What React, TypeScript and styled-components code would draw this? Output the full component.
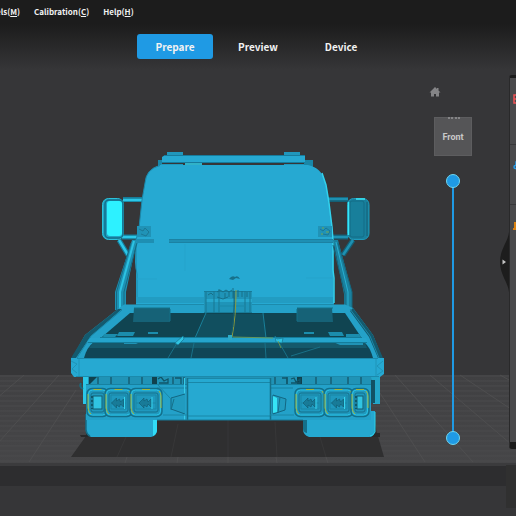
import React, { useState } from "react";
import styled, { createGlobalStyle } from "styled-components";

const GlobalStyle = createGlobalStyle`
  * { box-sizing: border-box; }
  body {
    margin: 0;
    background: #363638;
    color: #f2f2f2;
    font-family: "Noto Sans CJK SC", "Noto Sans", sans-serif;
  }
  button, input { font: inherit; color: inherit; margin: 0; padding: 0; border: 0; background: none; }
  button { cursor: pointer; }
`;

const Page = styled.div`
  position: relative;
  display: flex;
  flex-direction: column;
  min-height: 100vh;
  overflow: hidden;
  isolation: isolate;
`;

const Header = styled.header`
  display: flex;
  flex-direction: column;
  gap: 10px;
  height: 70px;
  background: linear-gradient(#1c1c1c 0, #1c1c1c 24px, #363638 100%);
`;

const MenuBar = styled.nav`
  display: flex;
  align-items: center;
  gap: 14px;
  height: 24px;
  margin-left: -4px;
`;

const MenuButton = styled.button`
  font-size: 8px;
  font-weight: 700;
  line-height: 12px;
  white-space: nowrap;
`;

const TabBar = styled.nav`
  display: flex;
  justify-content: center;
  gap: 7px;
`;

const TabButton = styled.button<{ $active: boolean }>`
  width: 76px;
  height: 25px;
  border-radius: 3px;
  background: ${(p) => (p.$active ? "#1f9ae4" : "transparent")};
  font-size: 10px;
  font-weight: 700;
  line-height: 25px;
`;

const Workspace = styled.main`
  flex: 1;
  display: flex;
  justify-content: flex-end;
`;

const SceneLayer = styled.svg`
  position: absolute;
  inset: 0;
  z-index: -1;
  width: 100%;
  height: 100%;
`;

const ViewTools = styled.div`
  display: flex;
  flex-direction: column;
  width: 38px;
  margin-right: 37px;
  padding: 16px 0 71px;
`;

const HomeButton = styled.button`
  display: flex;
  align-items: center;
  width: 12px;
  height: 12px;
  margin-left: -5px;
`;

const ViewCube = styled.button`
  position: relative;
  width: 38px;
  height: 39px;
  margin: 19px 0 18px;
  border: 1px solid #5d5d5f;
  background: #555557;
  color: #c8c8c8;
  font-family: Roboto, sans-serif;
  font-size: 9px;
  font-weight: 700;
`;

const CubeTop = styled.span`
  position: absolute;
  top: -1px;
  left: 13px;
  width: 12px;
  border-top: 2px dotted #858587;
`;

const LayerSlider = styled.div`
  position: relative;
  flex: 1;
  width: 14px;
  margin: 0 auto;
  &::before {
    content: "";
    position: absolute;
    inset: 7px 6px;
    background: #1f9ae4;
  }
`;

const LayerRange = styled.input`
  position: absolute;
  inset: 0;
  width: 14px;
  height: 100%;
  appearance: none;
  writing-mode: vertical-lr;
  direction: rtl;
  pointer-events: none;
  &::-webkit-slider-thumb {
    appearance: none;
    width: 14px;
    height: 14px;
    border: 1px solid #6fd5ee;
    border-radius: 50%;
    background: #1f9ae4;
    pointer-events: auto;
  }
`;

const SideDock = styled.aside`
  position: relative;
  display: flex;
  flex-direction: column;
  width: 7px;
  padding: 5px 0 8px;
`;

const SidePanel = styled.div`
  flex: 1;
  overflow: hidden;
  margin-bottom: 59px;
  border-top: 3px solid #1b1b1b;
  border-bottom: 7px solid #1b1b1b;
  border-left: 1px solid #29292a;
  border-radius: 3px 0 0 3px;
  background: #4a4a4c;
`;

const PanelSection = styled.div`
  display: flex;
  align-items: center;
  height: 60px;
  padding-left: 3px;
  border-bottom: 1px solid #38383a;
  &:first-child { height: 67px; padding-bottom: 24px; }
  &:nth-child(2) { padding-bottom: 18px; }
  &:last-child { padding-bottom: 16px; border: 0; }
  svg { flex: none; }
`;

const CollapseButton = styled.button`
  position: absolute;
  top: 162px;
  right: 7px;
  width: 10px;
  height: 60px;
  svg { display: block; }
`;

const DARK = "#145a6e";
const EDGE = "#1987a8";
const BODY = "#26a9d2";
const BRIGHT = "#31dcf7";

type LampProps = { x: number; w: number; small?: boolean };

const Lamp = ({ x, w, small }: LampProps) => (
  <g fill="none">
    <rect x={x} y="388.5" width={w} height="28" rx="5" fill="#1f98bd" stroke="#126f8a" strokeWidth="1.4" />
    <rect x={x + 1.5} y="390" width={w - 3} height="25" rx="4" stroke="#2bc3e6" />
    <rect x={x + 4} y="393" width={w - 8} height="19" rx="2" stroke="#16718c" />
    <path d={`M${x + w / 2 - 4} 389.5h8M${x + 1} 394v14q1 5 3 6M${x + w - 3} 391q2 2 2 5v12`} stroke="#a3b43a" />
    {small ? (
      <g>
        <rect x={x + 6} y="396" width={w - 12} height="13" fill="#30c4e2" stroke={DARK} />
        <path d={`M${x + 5} 396v13`} stroke="#0f586b" strokeWidth="2" strokeDasharray="2 2" />
      </g>
    ) : (
      <g>
        <path d={`M${x + 6} 395h${w - 12}v14h-${w - 12}zM${x + 6} 403h${w - 12}`} stroke="#1a86a5" />
        <path
          d={`M${x + w / 2 - 7} 403l5-5v3l3-2 1 3 3-3v8l-3-3-1 3-3-2v3z`}
          fill="#187b98" stroke="#10596f" strokeWidth=".6"
        />
        <path d={`M${x + w / 2 + 6} 397v12`} stroke="#37d4ed" />
      </g>
    )}
  </g>
);

const FloorLines = () => (
  <g stroke="#505052" fill="none" strokeWidth=".8">
    <path d="M430 375L532 462M460 375L590 462M395 375L473 462M378 390L425 462M500 375L660 462" />
    <path d="M24 375L-78 462M-6 375L-136 462M59 375L-19 462M76 390L29 462" />
    <path d="M127 457l-2 6M178 457l-1 6M228 457v6M276 457l1 6M326 457l2 6" />
  </g>
);

const Truck = () => (
  <g>
    <path d="M86 436L71 457H384L377 433L374 420H86z" fill="#2f2f30" />
    <path d="M80 435h8v2h-7zM374 433h6v4h-8z" fill="#29292a" />
    <path d="M126 437l-9 20M178 424l-7 33M228 420v37M275 422l2 35M320 437l6 20" stroke="#373738" />

    {/* roof light bar */}
    <path d="M158 160h4v6h-4zM304 160h9v7h-9z" fill={EDGE} />
    <path d="M167 152h16v5h-16zM284 152h16v5h-16z" fill="#2097bc" />
    <path d="M162 157l3-2H305v8H162z" fill={BODY} />
    <path d="M162 162.5H305M164 155.500H305" stroke="#167c9d" />
    <path d="M161 164h22v2h-22zM284 164h20v2h-20z" fill="#2098bd" />
    <path d="M185 164h17" stroke={BRIGHT} strokeWidth="1.500" />

    {/* mirror arms */}
    <path d="M123 199.500h20M122 237h17M119 240l9 15" stroke="#167c99" strokeWidth="5" />
    <path d="M123 200h20M122 237h17M119 240l9 15" stroke="#2bc7e8" strokeWidth="2.500" />
    <path d="M328 199.500h20M332 237h16M353 240l-10 15" stroke="#145f75" strokeWidth="5" />
    <path d="M328 199h20M332 237h16M353 240l-10 15" stroke="#1d91b2" strokeWidth="2.500" />

    {/* cab */}
    <path d="M160 165H308Q322 168 325 182L327 190L329 203L332 227L333 241L334 306H136V270L135 262L136 240L139 228L142 200L145 183Q146 169 160 165z" fill={BODY} />
    <path d="M160 165.500Q146 169 145 183L142 200L139 228L136 240V268l1 6V303" stroke="#1b88aa" fill="none" />
    <path d="M322 173L326 185L329 203L332 227L333 241V270l1 8V303" stroke="#32d1ed" strokeWidth="1.500" fill="none" />
    <path d="M136 297H333V303H136z" fill="#229cc2" />
    <path d="M136 304.500H334" stroke="#147491" />
    <path d="M137 239h17v4h-17zM169 239H333v4H169z" fill="#1e8fb3" />
    <path d="M169 239.500H333M169 242.500H333" stroke="#1b82a3" />
    <path d="M137 226h14v11h-14zM318 226h14v11h-14z" fill="#2093b7" />
    <path d="M139 229l4 2 2-3 4 4-3 4-5-2M320 229l3 2 3-3 4 3-2 4-5-1" stroke="#1b7895" fill="none" />
    <path d="M322 228h2M326 232h3M321 234h2" stroke="#72a352" />
    <path d="M185 244v27M137 279h20M306 278h26" stroke="#25a3cb" fill="none" />

    {/* mirrors */}
    <rect x="102.500" y="198.500" width="21" height="41" rx="6" fill="#20a3c4" stroke="#2bc3dc" />
    <rect x="105" y="200" width="18" height="38" rx="4" fill="none" stroke="#146f89" strokeWidth="1.500" />
    <rect x="107" y="201" width="15" height="35" rx="3" fill="#2df1ff" />
    <rect x="347.500" y="198.500" width="21.500" height="41" rx="6" fill="#18809d" stroke="#1f9aba" />
    <rect x="350" y="201" width="14" height="36" rx="2" fill="#187f9b" stroke="#136c86" />
    <path d="M348.500 202v33M356 199h9" stroke="#38e7f5" strokeWidth="1.500" />
    <path d="M367 202v34" stroke="#155f75" />

    {/* side struts */}
    <path d="M132 240h5L126 292v18H115V292z" fill="#1d91b3" />
    <path d="M134 241L120 292v18" stroke="#2cc3e3" strokeWidth="2" fill="none" />
    <path d="M131 243L116.500 292v18M137 243L124 292v18" stroke="#146c85" fill="none" />
    <path d="M333 240h5L352 292v18H344V294z" fill="#1a819f" />
    <path d="M336 242L348 292v18" stroke="#28b0d2" fill="none" />
    <path d="M338 243L352 292v18M333 245L345 294v16" stroke="#14677e" fill="none" />

    {/* truck bed */}
    <path d="M124 304.500H345L353 308L373 335L383 360H71L85 335L118 309z" fill="#24a1c8" />
    <path d="M118 309L85 335L71 358h5L91 336L122 309zM353 308L373 335L383 358h-5L369 337L350 311z" fill={DARK} />
    <path d="M122 310L91 336L77 358M350 309L370 336L379 358" stroke="#1a89a9" fill="none" />
    <path d="M130 313H345L361 337H102z" fill="#104451" />
    <path d="M206 314H263L266 337H195z" fill="#114f5f" />
    <path d="M93 343H365Q370 347 373 358H84Q87 347 93 343z" fill="#104656" />
    <path d="M93 343H365L367 348H89z" fill="#15596b" />
    <path d="M124 341h18l-6 3h-12zM331 341h32v4h-23z" fill="#2093b5" />
    <path d="M90 338H366l2 4H87z" fill="#25a5cc" />
    <path d="M100 337.500H362M88 342.500H367" stroke="#147d9b" />
    <path d="M134 308h36v14h-37zM297 308h35l1 14h-36z" fill="#166277" />
    <path d="M134 308h36M297 308h36M170 309v12M297 309v12" stroke="#137089" />
    <path d="M119 332h16l-2 4h-16zM104 334h14l-3 3h-12zM148 332h10v2h-10zM304 332h10v2h-10zM328 332h14l2 4h-14zM346 334h13l2 3h-15z" fill="#1b8dad" />
    <path d="M206 313L195 338M263 313l3 25" stroke="#19809a" />
    <path d="M194 343l-3 15M177 343l-9 15M265 343l1 15M280 344l8 14M291 356l29-9" stroke="#187087" />
    <path d="M183 336l-8 7 3 2 6-6zM275 336l2 3 6-1-1 5-6-1z" fill="#30c3e1" stroke="#167690" strokeWidth=".7" />
    <path d="M233 337l40 1M278 341l3 7" stroke="#789c49" strokeWidth=".8" />

    {/* winch */}
    <path d="M204 291h48v22h-48z" fill="#1f94b8" />
    <path d="M204 291.500h48M204 312.500h48" stroke="#187c9a" />
    <path d="M206 299h46v3h-46z" fill="#27a8cd" />
    <path d="M206 292v20M214 291v22M219 289v24M245 291v22M250 291v22" stroke="#187691" />
    <path d="M217 292l3-2 3 2 3-2 3 2 3-2M208 295l3-2 2 2M225 293v5M229 291v6M233 288v10M238 290v7M242 291v6M247 292v5M217 297l6 2 5-2" stroke="#167089" fill="none" />
    <path d="M219 306h26" stroke="#1b88a8" />
    <path d="M236 290Q236 317 232 337" stroke="#8b9a3d" fill="none" />
    <path d="M234 291Q235 317 231 337" stroke="#155b6d" fill="none" />
    <path d="M229 279q3-4 6-2 3-2 5 2l-4-1-3 2z" fill="#17718b" />
    <path d="M228 335h4v5h-4z" fill="#2eaac5" />

    {/* rear wheels */}
    <path d="M86 411H157V431q-1 5-6 6H91q-5-2-5-8z" fill="#25a8d0" />
    <path d="M153 418h4v13q-1 4-4 5z" fill={BRIGHT} />
    <path d="M303 411H375V431q-1 6-6 6H309q-6-2-6-8z" fill="#25a8d0" />
    <path d="M303 420h4v13q-4-1-4-4z" fill="#14708a" />
    <path d="M375 412v20q-2 4-5 4" stroke="#2dd1ec" fill="none" />
    <path d="M86 414v16q1 5 4 6" stroke="#166e88" strokeWidth="1.500" fill="none" />

    {/* underbody and bumper */}
    <path d="M83 377h5v27h-5z" fill="#2bc8e8" />
    <path d="M81 383q-2 4 2 6" stroke="#176a80" strokeWidth="2" fill="none" />
    <path d="M371 377h9v27h-7z" fill="#23a6c8" />
    <path d="M371 380h4v23h-4z" fill="#125264" />
    <path d="M88 377H371V420H88z" fill="#2093b6" />
    <path d="M89 377h8l-8 8zM152 377h5v7h-5zM297 377h5v7h-5z" fill="#10414e" />
    <path d="M98 377v7M111 377v7M129 377v7M142 377v7M173 377v7M184 377v7M275 377v7M287 377v7M316 377v7M331 377v7M348 377v7M361 377v7" stroke="#14566a" strokeWidth="1.300" />
    <path d="M158 379l3-2 3 4 4-2v4h-9M291 379l3-1 2 4 4-3v4h-9M175 378h6v6M282 378h5v6" stroke="#105669" fill="none" strokeWidth="1.300" />
    <path d="M86 384H371V420H86z" fill="#23a1c9" />
    <path d="M86 384.500H187M270 384.500H371M157 388h30M270 388h23" stroke="#1781a0" />
    <path d="M188 378H270V420H188z" fill="#26a9d1" />
    <path d="M188 378.500H270M188 382.500H270M188 416H270" stroke="#1987a8" />
    <path d="M187.500 378v42M270.500 378v42" stroke="#167089" strokeWidth="1.500" />
    <path d="M184.500 378v42" stroke="#36cbe8" />
    <path d="M185 394L171 398v11l14 5M273 395l13 4-1 11-12 4z" fill="#219bbf" stroke="#136782" />
    <path d="M174 399l-3 11M280 397l-2 16" stroke="#16718a" />
    <path d="M273 396l4 2v14l-4 1z" fill="#36e4f5" />
    <path d="M157 384l13 14M163 415h24M270 415h24" stroke="#1b86a6" />
    <path d="M157 420H303" stroke="#167b98" />
    <Lamp x={87} w={21} small />
    <Lamp x={105} w={27} />
    <Lamp x={130} w={32} />
    <Lamp x={295} w={30} />
    <Lamp x={324} w={29} />
    <Lamp x={351} w={18} small />

    {/* tailgate */}
    <path d="M71 358H384V374l-4 3H74l-3-4z" fill={BODY} />
    <path d="M77 358.500H378M76 376.500H379" stroke="#1b8aac" />
    <path d="M79 359v17M376 359v17M71 361l6 3-5 5 5 4M383 361l-6 5 6 5-6 4" stroke="#1f94b8" fill="none" />
  </g>
);

const Scene = () => (
  <SceneLayer viewBox="0 0 516 516" preserveAspectRatio="xMidYMid slice" role="img" aria-label="Truck model on the build plate, front view">
    <defs>
      <pattern id="rows" width="8" height="5" patternUnits="userSpaceOnUse">
        <path d="M0 1h8" stroke="#49494b" />
      </pattern>
      <linearGradient id="floor" x1="0" y1="0" x2="0" y2="1">
        <stop offset="0" stopColor="#404042" />
        <stop offset="1" stopColor="#464648" />
      </linearGradient>
    </defs>
    <rect x="-600" width="1700" height="516" fill="#363638" />
    <rect x="-600" y="375" width="1700" height="89" fill="url(#floor)" />
    <rect x="-600" y="375" width="1700" height="89" fill="url(#rows)" />
    <FloorLines />
    <rect x="-600" y="463" width="1700" height="3" fill="#3b3b3d" />
    <rect x="-600" y="466" width="1700" height="20" fill="#2d2d2f" />
    <rect x="506" y="465" width="600" height="43" fill="#303030" />
    <Truck />
  </SceneLayer>
);

const tabs = ["Prepare", "Preview", "Device"];
const menus = [
  { label: "els", hotkey: "M" },
  { label: "Calibration", hotkey: "C" },
  { label: "Help", hotkey: "H" },
];

export default function App() {
  const [tab, setTab] = useState("Prepare");
  const [low, setLow] = useState(0);
  const [high, setHigh] = useState(100);

  return (
    <Page>
      <GlobalStyle />
      <Scene />
      <Header>
        <MenuBar aria-label="Application menu">
          {menus.map((m) => (
            <MenuButton key={m.label} type="button">
              {m.label}(<u>{m.hotkey}</u>)
            </MenuButton>
          ))}
        </MenuBar>
        <TabBar aria-label="Views">
          {tabs.map((name) => (
            <TabButton key={name} type="button" $active={name === tab} onClick={() => setTab(name)}>
              {name}
            </TabButton>
          ))}
        </TabBar>
      </Header>
      <Workspace>
        <ViewTools>
          <HomeButton type="button" aria-label="Reset view">
            <svg width="12" height="12" viewBox="0 0 12 12" fill="#858587">
              <path d="M6 1L8 3V2H9.500V4.500L11.500 6.500H10V10.500H7V8H5V10.500H2V6.500H.500z" />
            </svg>
          </HomeButton>
          <ViewCube type="button">
            <CubeTop />
            Front
          </ViewCube>
          <LayerSlider>
            <LayerRange type="range" aria-label="Top layer" value={high} onChange={(e) => setHigh(Math.max(low, +e.target.value))} />
            <LayerRange type="range" aria-label="Bottom layer" value={low} onChange={(e) => setLow(Math.min(high, +e.target.value))} />
          </LayerSlider>
        </ViewTools>
        <SideDock>
          <SidePanel>
            <PanelSection>
              <svg width="12" height="12" viewBox="0 0 12 12" fill="none" stroke="#f05355" strokeWidth="1.5">
                <path d="M1 2h10v8H1zM1 6h10" />
              </svg>
            </PanelSection>
            <PanelSection>
              <svg width="12" height="12" viewBox="0 0 12 12" fill="none" stroke="#279be8" strokeWidth="1.5">
                <circle cx="2.500" cy="7" r="1.500" />
                <path d="M3 5V2h6" />
              </svg>
            </PanelSection>
            <PanelSection>
              <svg width="12" height="12" viewBox="0 0 12 12" fill="#d98212">
                <path d="M1 1h10v7H9v3H3V9H0V7h1z" />
              </svg>
            </PanelSection>
          </SidePanel>
          <CollapseButton type="button" aria-label="Collapse panel">
            <svg width="10" height="60" viewBox="0 0 10 60">
              <path d="M10 0C9 10 1 17 1 30S9 50 10 60z" fill="#1d1d1d" />
              <path d="M3.500 27.500L7 30L3.500 32.500z" fill="#c4c4c4" />
            </svg>
          </CollapseButton>
        </SideDock>
      </Workspace>
    </Page>
  );
}
